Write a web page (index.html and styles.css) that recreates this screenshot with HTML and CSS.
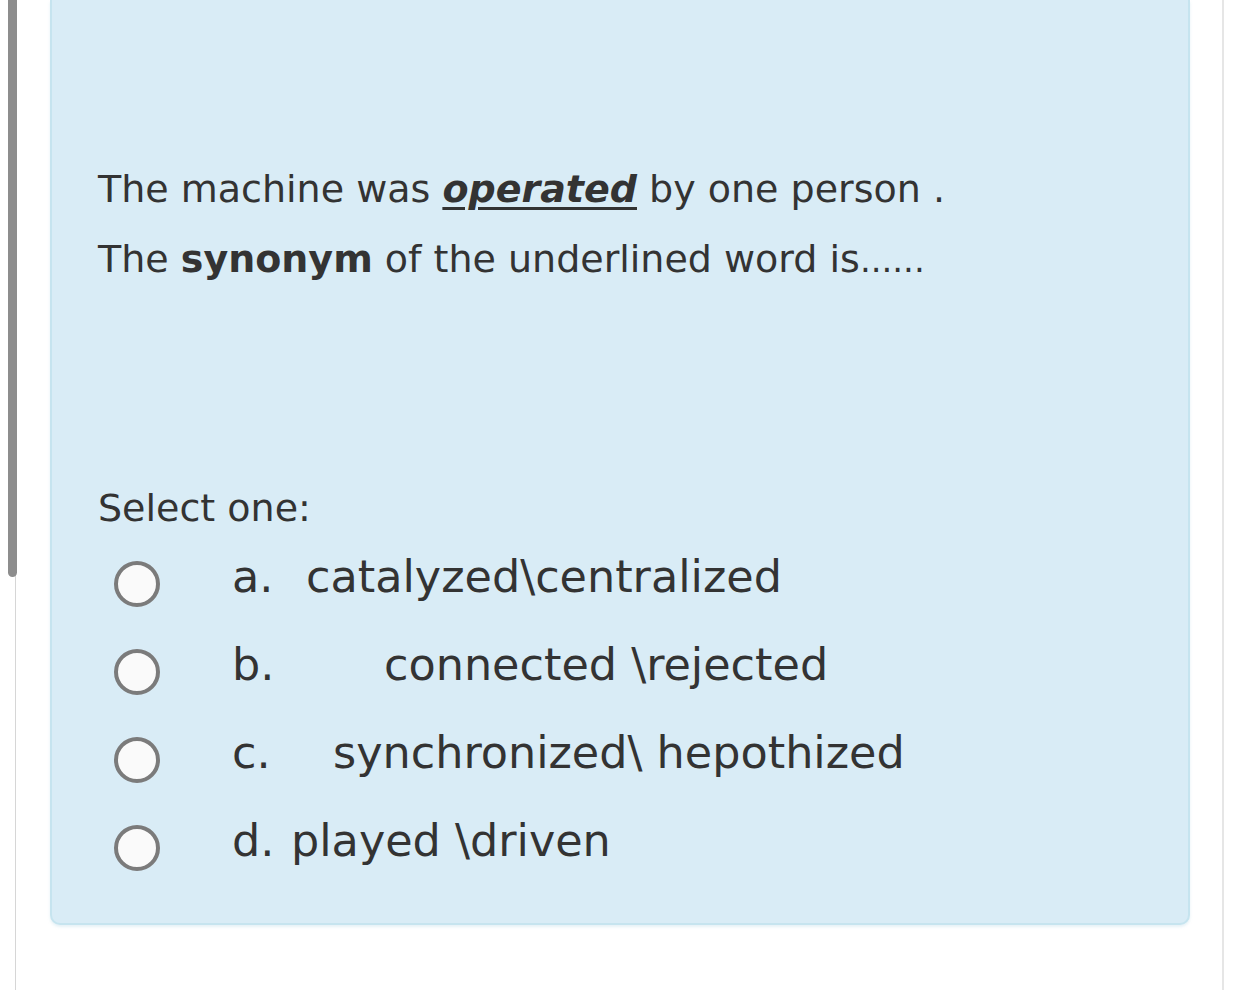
FILE: index.html
```html
<!DOCTYPE html>
<html lang="en">
<head>
<meta charset="utf-8">
<title>Question</title>
<link rel="stylesheet" href="styles.css">
</head>
<body>
<div class="scrollbar"></div>
<div class="page">
  <div class="que">
    <div class="qtext">
      <p class="line1">The machine was <strong class="key">operated</strong> by one person .</p>
      <p class="line2">The <strong>synonym</strong> of the underlined word is<span class="dots">......</span></p>
    </div>
    <div class="prompt">Select one:</div>
    <div class="answers">
      <div class="opt"><span class="radio"></span><span class="num num-a">a.</span><span class="ans">catalyzed\centralized</span></div>
      <div class="opt"><span class="radio"></span><span class="num num-b">b.</span><span class="ans">connected \rejected</span></div>
      <div class="opt"><span class="radio"></span><span class="num num-c">c.</span><span class="ans">synchronized\ hepothized</span></div>
      <div class="opt"><span class="radio"></span><span class="num num-d">d.</span><span class="ans">played \driven</span></div>
    </div>
  </div>
</div>
</body>
</html>
```
FILE: styles.css
```css
html, body {
  margin: 0;
  padding: 0;
  background: #ffffff;
}
body {
  font-family: "DejaVu Sans", Verdana, sans-serif;
  color: #333333;
  height: 990px;
  overflow: hidden;
  position: relative;
}
.scrollbar {
  position: absolute;
  left: 8px;
  top: 0;
  width: 9px;
  height: 577px;
  background: #8d8d8d;
  border-radius: 0 0 5px 5px;
  z-index: 2;
}
.page {
  margin-left: 15px;
  width: 1209px;
  min-height: 990px;
  box-sizing: border-box;
  border-left: 1px solid #d6d6d6;
  border-right: 2px solid #e6e6e6;
  padding: 0 32px 0 34px;
}
.que {
  background: #d9ecf6;
  border: 2px solid #c6e4ef;
  border-top: none;
  border-radius: 0 0 10px 10px;
  height: 925px;
  box-sizing: border-box;
  padding: 163px 40px 0 46px;
  box-shadow: 0 2px 3px rgba(180, 215, 230, 0.35);
}
.qtext p {
  margin: 0;
  font-size: 38px;
  line-height: 53px;
}
.qtext .line2 {
  margin-top: 17px;
}
.key {
  font-style: italic;
  text-decoration: underline;
  text-decoration-thickness: 3px;
  text-underline-offset: 5px;
}
.dots {
  font-size: 34px;
}
.prompt {
  font-size: 38px;
  line-height: 48px;
  margin-top: 197px;
}
.answers {
  margin-top: 1px;
}
.opt {
  display: flex;
  align-items: flex-start;
  height: 88px;
  font-size: 44.5px;
  line-height: 88px;
  white-space: nowrap;
}
.radio {
  flex: none;
  width: 46px;
  height: 46px;
  box-sizing: border-box;
  border: 4px solid #7b7b7b;
  border-radius: 50%;
  background: #fafafa;
  margin: 28px 72px 0 16px;
}
.num {
  display: inline-block;
}
.num-a { width: 74px; }
.num-b { width: 152px; }
.num-c { width: 101px; }
.num-d { width: 59px; }
```
